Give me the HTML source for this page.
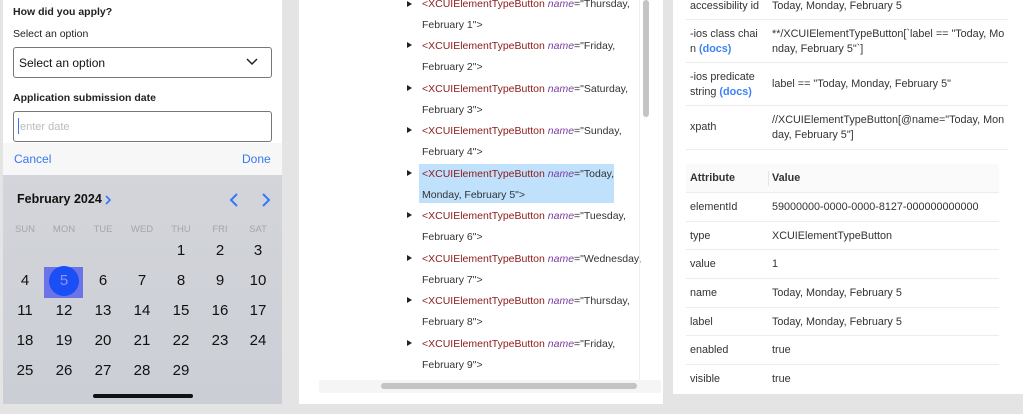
<!DOCTYPE html>
<html><head><meta charset="utf-8"><style>
*{margin:0;padding:0;box-sizing:border-box}
body{width:1023px;height:414px;overflow:hidden;background:#e4e4e4;font-family:"Liberation Sans",Arial,sans-serif;position:relative}
.a{position:absolute}
#left{left:3px;top:0;width:279px;height:404px;background:#fff;overflow:hidden}
.cal{left:0;top:175px;width:279px;height:229px;background:linear-gradient(#d3d5da,#cbced5)}
.dn{position:absolute;width:30px;text-align:center;font-size:15px;color:#111}
.wd{position:absolute;width:30px;text-align:center;font-size:9.5px;color:#a3a6ad}
#mid{left:299px;top:0;width:364px;height:404px;background:#fff}
.t{position:absolute;left:123px;font-size:10.5px;color:#333;line-height:21px;white-space:nowrap}
.t b{font-weight:normal;color:#8b1a1a}.t i{color:#7a3ea0}
.tri{position:absolute;left:108px;width:0;height:0;border-left:5px solid #222;border-top:3.5px solid transparent;border-bottom:3.5px solid transparent}
#right{left:673px;top:0;width:350px;height:394px;background:#fff}
.r{position:absolute;font-size:10.8px;color:#333;line-height:15px;white-space:nowrap}
.ln{position:absolute;height:1px;background:#ececec}
.docs{color:#3b82f6;font-weight:bold}
</style></head><body>
<div id="left" class="a">
 <div class="a" style="left:10px;top:6px;font-size:10.5px;font-weight:bold;color:#222">How did you apply?</div>
 <div class="a" style="left:10px;top:28px;font-size:10.5px;color:#222">Select an option</div>
 <div class="a" style="left:10px;top:47px;width:259px;height:31px;border:1.5px solid #777;border-radius:3px"></div>
 <div class="a" style="left:16px;top:56px;font-size:12px;color:#111">Select an option</div>
 <svg class="a" style="left:243px;top:58px" width="12" height="8"><path d="M1 1 L6 6 L11 1" fill="none" stroke="#222" stroke-width="1.5"/></svg>
 <div class="a" style="left:10px;top:92px;font-size:10.5px;font-weight:bold;color:#222">Application submission date</div>
 <div class="a" style="left:10px;top:111px;width:259px;height:31px;border:1.5px solid #777;border-radius:3px"></div>
 <div class="a" style="left:15px;top:118px;width:1px;height:16px;background:#3478f6"></div>
 <div class="a" style="left:17px;top:121px;font-size:11px;color:#bbb">enter date</div>
 <div class="a" style="left:0;top:143px;width:279px;height:32px;background:#f7f7f7"></div>
 <div class="a" style="left:11px;top:152px;font-size:12px;color:#3478f6">Cancel</div>
 <div class="a" style="left:239px;top:152px;font-size:12px;color:#3478f6">Done</div>
 <div class="a cal">
  <div class="a" style="left:14px;top:17px;font-size:12.5px;font-weight:bold;color:#111">February 2024</div>
  <svg class="a" style="left:102px;top:20px" width="7" height="10"><path d="M1 1 L5 5 L1 9" fill="none" stroke="#3478f6" stroke-width="1.6"/></svg>
  <svg class="a" style="left:225px;top:18px" width="45" height="14"><path d="M9 1 L3 7 L9 13" fill="none" stroke="#3478f6" stroke-width="2"/><path d="M35 1 L41 7 L35 13" fill="none" stroke="#3478f6" stroke-width="2"/></svg>
  <div class="wd" style="left:7px;top:49px">SUN</div><div class="wd" style="left:46px;top:49px">MON</div><div class="wd" style="left:85px;top:49px">TUE</div><div class="wd" style="left:124px;top:49px">WED</div><div class="wd" style="left:163px;top:49px">THU</div><div class="wd" style="left:202px;top:49px">FRI</div><div class="wd" style="left:240px;top:49px">SAT</div>
  <div class="a" style="left:41px;top:92px;width:39px;height:31px;background:#6b74e6"></div>
  <div class="a" style="left:46px;top:91px;width:30px;height:30px;border-radius:50%;background:#1a4ff5"></div>
  <div class="dn" style="left:163px;top:67px">1</div><div class="dn" style="left:202px;top:67px">2</div><div class="dn" style="left:240px;top:67px">3</div>
  <div class="dn" style="left:7px;top:97px">4</div><div class="dn" style="left:46px;top:97px;color:#8d95f2">5</div><div class="dn" style="left:85px;top:97px">6</div><div class="dn" style="left:124px;top:97px">7</div><div class="dn" style="left:163px;top:97px">8</div><div class="dn" style="left:202px;top:97px">9</div><div class="dn" style="left:240px;top:97px">10</div>
  <div class="dn" style="left:7px;top:127px">11</div><div class="dn" style="left:46px;top:127px">12</div><div class="dn" style="left:85px;top:127px">13</div><div class="dn" style="left:124px;top:127px">14</div><div class="dn" style="left:163px;top:127px">15</div><div class="dn" style="left:202px;top:127px">16</div><div class="dn" style="left:240px;top:127px">17</div>
  <div class="dn" style="left:7px;top:157px">18</div><div class="dn" style="left:46px;top:157px">19</div><div class="dn" style="left:85px;top:157px">20</div><div class="dn" style="left:124px;top:157px">21</div><div class="dn" style="left:163px;top:157px">22</div><div class="dn" style="left:202px;top:157px">23</div><div class="dn" style="left:240px;top:157px">24</div>
  <div class="dn" style="left:7px;top:187px">25</div><div class="dn" style="left:46px;top:187px">26</div><div class="dn" style="left:85px;top:187px">27</div><div class="dn" style="left:124px;top:187px">28</div><div class="dn" style="left:163px;top:187px">29</div>
  <div class="a" style="left:90px;top:219px;width:100px;height:4px;border-radius:2px;background:#111"></div>
 </div>
</div>
<div id="mid" class="a">
 <div class="a" style="left:120px;top:164px;width:195px;height:39px;background:#bfe1fb"></div>
 <div class="tri" style="top:1px"></div><div class="t" style="top:-6px"><b>&lt;XCUIElementTypeButton</b> <i>name</i>="Thursday,<br>February 1"&gt;</div>
 <div class="tri" style="top:42px"></div><div class="t" style="top:36px"><b>&lt;XCUIElementTypeButton</b> <i>name</i>="Friday,<br>February 2"&gt;</div>
 <div class="tri" style="top:85px"></div><div class="t" style="top:79px"><b>&lt;XCUIElementTypeButton</b> <i>name</i>="Saturday,<br>February 3"&gt;</div>
 <div class="tri" style="top:127px"></div><div class="t" style="top:121px"><b>&lt;XCUIElementTypeButton</b> <i>name</i>="Sunday,<br>February 4"&gt;</div>
 <div class="tri" style="top:170px"></div><div class="t" style="top:164px"><b>&lt;XCUIElementTypeButton</b> <i>name</i>="Today,<br>Monday, February 5"&gt;</div>
 <div class="tri" style="top:212px"></div><div class="t" style="top:206px"><b>&lt;XCUIElementTypeButton</b> <i>name</i>="Tuesday,<br>February 6"&gt;</div>
 <div class="tri" style="top:255px"></div><div class="t" style="top:249px"><b>&lt;XCUIElementTypeButton</b> <i>name</i>="Wednesday,<br>February 7"&gt;</div>
 <div class="tri" style="top:297px"></div><div class="t" style="top:291px"><b>&lt;XCUIElementTypeButton</b> <i>name</i>="Thursday,<br>February 8"&gt;</div>
 <div class="tri" style="top:340px"></div><div class="t" style="top:334px"><b>&lt;XCUIElementTypeButton</b> <i>name</i>="Friday,<br>February 9"&gt;</div>
 <div class="a" style="left:340px;top:0;width:1px;height:380px;background:#eee"></div>
 <div class="a" style="left:20px;top:380px;width:342px;height:13px;background:#f5f5f5"></div>
 <div class="a" style="left:344px;top:0;width:6px;height:117px;border-radius:3px;background:#c4c4c4"></div>
 <div class="a" style="left:82px;top:383px;width:256px;height:6px;border-radius:3px;background:#c4c4c4"></div>
</div>
<div id="right" class="a">
 <div class="r" style="left:17px;top:-1px">accessibility id</div><div class="r" style="left:99px;top:-1px">Today, Monday, February 5</div>
 <div class="ln" style="left:13px;top:19px;width:322px"></div>
 <div class="r" style="left:17px;top:27px">-ios class chai<br>n <span class="docs">(docs)</span></div><div class="r" style="left:99px;top:27px">**/XCUIElementTypeButton[`label == "Today, Mo<br>nday, February 5"`]</div>
 <div class="ln" style="left:13px;top:62px;width:322px"></div>
 <div class="r" style="left:17px;top:70px">-ios predicate<br>string <span class="docs">(docs)</span></div><div class="r" style="left:99px;top:77px">label == "Today, Monday, February 5"</div>
 <div class="ln" style="left:13px;top:105px;width:322px"></div>
 <div class="r" style="left:17px;top:120px">xpath</div><div class="r" style="left:99px;top:113px">//XCUIElementTypeButton[@name="Today, Mon<br>day, February 5"]</div>
 <div class="ln" style="left:13px;top:149px;width:322px"></div>
 <div class="a" style="left:13px;top:164px;width:313px;height:28px;background:#fafafa"></div>
 <div class="a" style="left:95px;top:171px;width:1px;height:15px;background:#e5e5e5"></div>
 <div class="r" style="left:17px;top:171px;font-weight:bold">Attribute</div><div class="r" style="left:99px;top:171px;font-weight:bold">Value</div>
 <div class="ln" style="left:13px;top:192px;width:313px"></div>
 <div class="r" style="left:17px;top:200px">elementId</div><div class="r" style="left:99px;top:200px">59000000-0000-0000-8127-000000000000</div>
 <div class="ln" style="left:13px;top:221px;width:313px"></div>
 <div class="r" style="left:17px;top:229px">type</div><div class="r" style="left:99px;top:229px">XCUIElementTypeButton</div>
 <div class="ln" style="left:13px;top:249px;width:313px"></div>
 <div class="r" style="left:17px;top:257px">value</div><div class="r" style="left:99px;top:257px">1</div>
 <div class="ln" style="left:13px;top:278px;width:313px"></div>
 <div class="r" style="left:17px;top:286px">name</div><div class="r" style="left:99px;top:286px">Today, Monday, February 5</div>
 <div class="ln" style="left:13px;top:307px;width:313px"></div>
 <div class="r" style="left:17px;top:315px">label</div><div class="r" style="left:99px;top:315px">Today, Monday, February 5</div>
 <div class="ln" style="left:13px;top:335px;width:313px"></div>
 <div class="r" style="left:17px;top:343px">enabled</div><div class="r" style="left:99px;top:343px">true</div>
 <div class="ln" style="left:13px;top:364px;width:313px"></div>
 <div class="r" style="left:17px;top:372px">visible</div><div class="r" style="left:99px;top:372px">true</div>
</div>
</body></html>
